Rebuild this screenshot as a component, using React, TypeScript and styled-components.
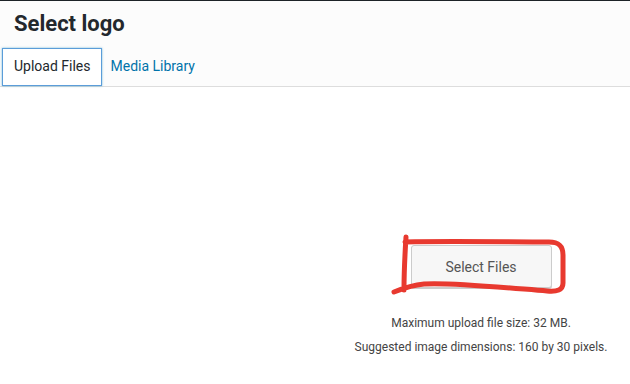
import React from "react";
import styled, { createGlobalStyle } from "styled-components";

const GlobalStyle = createGlobalStyle`
  html, body {
    margin: 0;
    padding: 0;
    background: #ffffff;
    overflow: hidden;
  }
  body {
    font-family: Roboto, "Liberation Sans", sans-serif;
  }
`;

const Modal = styled.div`
  width: 100%;
  height: 384px;
  display: flex;
  flex-direction: column;
  background: #ffffff;
  border-top: 1px solid #1d2327;
  box-sizing: border-box;
`;

const Header = styled.div`
  background: #fcfcfc;
  display: flex;
  flex-direction: column;
  border-bottom: 1px solid #dddddd;
`;

const Title = styled.h1`
  margin: 0;
  padding: 8px 14px 0;
  height: 47px;
  box-sizing: border-box;
  font-size: 22px;
  line-height: 29px;
  font-weight: 700;
  color: #23282d;
`;

const TabBar = styled.div`
  display: flex;
  align-items: stretch;
  padding-left: 2px;
  height: 38px;
`;

const Tab = styled.button<{ $active?: boolean }>`
  font-family: inherit;
  font-size: 14px;
  background: ${(p) => (p.$active ? "#ffffff" : "transparent")};
  color: ${(p) => (p.$active ? "#23282d" : "#0073aa")};
  border: 1px solid ${(p) => (p.$active ? "#5b9dd9" : "transparent")};
  box-shadow: ${(p) => (p.$active ? "0 0 2px rgba(30,140,190,0.6)" : "none")};
  padding: 0 ${(p) => (p.$active ? "10px" : "8px")} 2px ${(p) => (p.$active ? "11px" : "8px")};
  margin: 0;
  cursor: pointer;
`;

const Uploader = styled.div`
  flex: 1;
  display: flex;
  flex-direction: column;
  align-items: center;
  padding-top: 158px;
  padding-left: 332px;
`;

const ButtonWrap = styled.div`
  position: relative;
`;

const SelectButton = styled.button`
  width: 141px;
  height: 43px;
  font-family: inherit;
  font-size: 14px;
  color: #555555;
  background: #f7f7f7;
  border: 1px solid #cccccc;
  border-radius: 3px;
  box-shadow: 0 1px 0 #cccccc;
  cursor: pointer;
`;

const Scribble = styled.svg`
  position: absolute;
  left: -22px;
  top: -12px;
  pointer-events: none;
`;

const Info = styled.p`
  margin: 0;
  font-size: 12px;
  line-height: 24px;
  color: #444444;
  text-align: center;
  white-space: nowrap;
`;

const InfoBlock = styled.div`
  margin-top: 23px;
  display: flex;
  flex-direction: column;
`;

const App: React.FC = () => {
  return (
    <>
      <GlobalStyle />
      <Modal>
        <Header>
          <Title>Select logo</Title>
          <TabBar>
            <Tab $active>Upload Files</Tab>
            <Tab>Media Library</Tab>
          </TabBar>
        </Header>
        <Uploader>
          <ButtonWrap>
            <SelectButton>Select Files</SelectButton>
            <Scribble width="190" height="68" viewBox="0 0 190 68">
              <path
                d="M17 4 C16 20 15 38 15 57 M16 9 C60 8 120 9 160 9 C170 9 174 13 174 22 L174 50 C174 57 168 59 158 58 C120 55 60 49 35 51 C25 52 15 55 5 59"
                fill="none"
                stroke="#e8392f"
                strokeWidth="5"
                strokeLinecap="round"
                strokeLinejoin="round"
              />
            </Scribble>
          </ButtonWrap>
          <InfoBlock>
            <Info>Maximum upload file size: 32 MB.</Info>
            <Info>Suggested image dimensions: 160 by 30 pixels.</Info>
          </InfoBlock>
        </Uploader>
      </Modal>
    </>
  );
};

export default App;
